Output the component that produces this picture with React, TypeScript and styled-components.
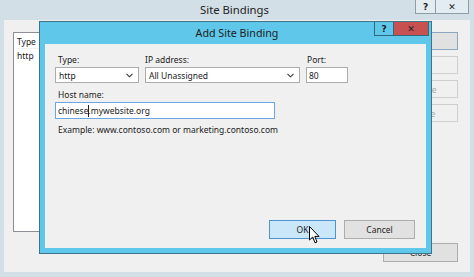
import React from "react";
import styled, { createGlobalStyle } from "styled-components";

const Global = createGlobalStyle`
  html, body { margin: 0; padding: 0; width: 474px; height: 277px; overflow: hidden; }
  body { font-family: "Noto Sans", "Open Sans", sans-serif; color: #1a1a1a; }
  * { box-sizing: border-box; }
`;

const Window = styled.div`
  position: relative;
  width: 474px;
  height: 277px;
  background: #d3dfe6;
  display: flex;
  flex-direction: column;
`;

const TitleBar = styled.div`
  height: 20px;
  display: grid;
  grid-template-columns: 1fr auto 1fr;
  align-items: start;
  padding-right: 5px;
`;

const TitleText = styled.div<{ $size: number; $h: number }>`
  font-size: ${(p) => p.$size}px;
  line-height: ${(p) => p.$h}px;
  color: #222;
  grid-column: 2;
  white-space: nowrap;
`;

const Captions = styled.div`
  grid-column: 3;
  justify-self: end;
  display: flex;
`;

const CaptionButton = styled.div<{ $w: number; $bg: string; $border: string }>`
  width: ${(p) => p.$w}px;
  height: 14px;
  background: ${(p) => p.$bg};
  border: 1px solid ${(p) => p.$border};
  border-top: none;
  display: flex;
  align-items: center;
  justify-content: center;
  font-family: "DejaVu Sans", sans-serif;
  font-weight: bold;
  font-size: 9px;
  color: #222;
  & + & { border-left: none; }
`;

const Body = styled.div`
  flex: 1;
  margin: 0 4px 5px 4px;
  background: #f0f0f0;
  padding: 12px 12px 10px 9px;
  display: flex;
  flex-direction: column;
`;

const Main = styled.div`
  display: flex;
  gap: 7px;
  height: 200px;
`;

const ListBox = styled.div`
  flex: 1;
  background: #fff;
  border: 1px solid #8c9096;
  font-size: 8.5px;
  padding: 1px 0 0 3px;
`;

const ListHeader = styled.div`
  height: 15px;
  line-height: 15px;
  border-bottom: 1px solid #f2f2f2;
`;

const ListRow = styled.div`
  height: 13px;
  line-height: 13px;
`;

const SideColumn = styled.div`
  width: 75px;
  display: flex;
  flex-direction: column;
  gap: 6px;
`;

const SideButton = styled.div<{ $primary?: boolean }>`
  height: 18px;
  border: 1px solid ${(p) => (p.$primary ? "#8aa6c1" : "#cfcfcf")};
  background: ${(p) => (p.$primary ? "#e1e1e1" : "#f0f0f0")};
  color: ${(p) => (p.$primary ? "#222" : "#a8a8a8")};
  font-size: 8.5px;
  display: flex;
  align-items: center;
  justify-content: center;
`;

const Footer = styled.div`
  margin-top: auto;
  display: flex;
  justify-content: flex-end;
`;

const GreyButton = styled.div<{ $w: number }>`
  width: ${(p) => p.$w}px;
  height: 19px;
  background: #e1e1e1;
  border: 1px solid #adadad;
  font-size: 8.5px;
  display: flex;
  align-items: center;
  justify-content: center;
  color: #222;
`;

const Dialog = styled.div`
  position: absolute;
  left: 39px;
  top: 21px;
  width: 393px;
  height: 233px;
  border: 1px solid #3f7488;
  background: #5fc7e9;
  display: flex;
  flex-direction: column;
  padding: 0 5px 5px 5px;
`;

const DialogTitle = styled.div`
  height: 22px;
  display: grid;
  grid-template-columns: 1fr auto 1fr;
  margin-right: -3px;
`;

const DialogBody = styled.div`
  flex: 1;
  background: #f0f0f0;
  padding: 10px 11px 9px 10px;
  display: flex;
  flex-direction: column;
`;

const FieldRow = styled.div`
  display: flex;
  gap: 6px;
`;

const Field = styled.div<{ $w: number }>`
  width: ${(p) => p.$w}px;
  display: flex;
  flex-direction: column;
`;

const Label = styled.div<{ $indent?: number; $top?: number }>`
  font-size: 8.5px;
  line-height: 12px;
  margin-top: ${(p) => p.$top ?? 0}px;
  margin-bottom: 1px;
  padding-left: ${(p) => p.$indent ?? 0}px;
  white-space: nowrap;
`;

const SelectBox = styled.div`
  height: 16px;
  background: #fff;
  border: 1px solid #acacac;
  display: flex;
  align-items: center;
  padding: 0 5px 0 3px;
  font-size: 8.5px;
`;

const SelectText = styled.span`
  flex: 1;
`;

const TextBox = styled.div<{ $w: number; $focus?: boolean }>`
  width: ${(p) => p.$w}px;
  height: ${(p) => (p.$focus ? 17 : 16)}px;
  background: #fff;
  border: 1px solid ${(p) => (p.$focus ? "#6aa6e0" : "#acacac")};
  display: flex;
  align-items: center;
  padding: 0 2px;
  font-size: 8.5px;
  white-space: nowrap;
`;

const Caret = styled.span`
  display: inline-block;
  width: 1px;
  height: 12px;
  background: #222;
  margin: 0 -1px 0 0;
`;

const Hint = styled.div`
  font-size: 8.5px;
  line-height: 12px;
  margin-top: 5px;
  padding-left: 3px;
  white-space: nowrap;
`;

const ButtonRow = styled.div`
  margin-top: auto;
  display: flex;
  justify-content: flex-end;
  gap: 8px;
`;

const DialogButton = styled.div<{ $w: number; $hot?: boolean }>`
  width: ${(p) => p.$w}px;
  height: 19px;
  background: ${(p) => (p.$hot ? "#cae6f9" : "#e1e1e1")};
  border: 1px solid ${(p) => (p.$hot ? "#4d93cf" : "#adadad")};
  font-size: 8.5px;
  display: flex;
  align-items: center;
  justify-content: center;
  color: #222;
`;

const Pointer = styled.svg`
  position: absolute;
  left: 309px;
  top: 226px;
`;

const Chevron = () => (
  <svg width="7" height="5" viewBox="0 0 7 5">
    <polyline points="0.5,0.8 3.5,3.8 6.5,0.8" fill="none" stroke="#333" strokeWidth="1.1" />
  </svg>
);

export default function App() {
  return (
    <>
      <Global />
      <Window>
        <TitleBar>
          <TitleText $size={11.3} $h={20}>Site Bindings</TitleText>
          <Captions>
            <CaptionButton $w={21} $bg="#e3ecf1" $border="#8e9ca5">?</CaptionButton>
            <CaptionButton $w={33} $bg="#e3ecf1" $border="#8e9ca5">✕</CaptionButton>
          </Captions>
        </TitleBar>
        <Body>
          <Main>
            <ListBox>
              <ListHeader>Type</ListHeader>
              <ListRow>http</ListRow>
            </ListBox>
            <SideColumn>
              <SideButton $primary>Add...</SideButton>
              <SideButton>Edit...</SideButton>
              <SideButton>Remove</SideButton>
              <SideButton>Browse</SideButton>
            </SideColumn>
          </Main>
          <Footer>
            <GreyButton $w={75}>Close</GreyButton>
          </Footer>
        </Body>

        <Dialog>
          <DialogTitle>
            <TitleText $size={10.7} $h={22}>Add Site Binding</TitleText>
            <Captions>
              <CaptionButton $w={20} $bg="#5fc7e9" $border="#2f6a80">?</CaptionButton>
              <CaptionButton $w={35} $bg="#c75050" $border="#2f6a80">✕</CaptionButton>
            </Captions>
          </DialogTitle>
          <DialogBody>
            <FieldRow>
              <Field $w={84}>
                <Label $indent={3}>Type:</Label>
                <SelectBox>
                  <SelectText>http</SelectText>
                  <Chevron />
                </SelectBox>
              </Field>
              <Field $w={155}>
                <Label>IP address:</Label>
                <SelectBox>
                  <SelectText>All Unassigned</SelectText>
                  <Chevron />
                </SelectBox>
              </Field>
              <Field $w={42}>
                <Label $indent={1}>Port:</Label>
                <TextBox $w={42}>80</TextBox>
              </Field>
            </FieldRow>
            <Label $indent={3} $top={6}>Host name:</Label>
            <TextBox $w={220} $focus>
              chinese<Caret />.mywebsite.org
            </TextBox>
            <Hint>Example: www.contoso.com or marketing.contoso.com</Hint>
            <ButtonRow>
              <DialogButton $w={67} $hot>OK</DialogButton>
              <DialogButton $w={71}>Cancel</DialogButton>
            </ButtonRow>
          </DialogBody>
        </Dialog>

        <Pointer width="11" height="18" viewBox="0 0 11 18">
          <path
            d="M0.5 0.5 L0.5 14 L3.7 11 L6 16.8 L8 16 L5.8 10.4 L10 10.4 Z"
            fill="#fff"
            stroke="#000"
            strokeWidth="1"
            strokeLinejoin="round"
          />
        </Pointer>
      </Window>
    </>
  );
}
